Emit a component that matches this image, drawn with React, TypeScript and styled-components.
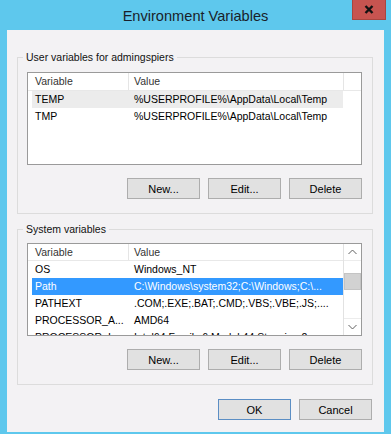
import styled, { createGlobalStyle } from "styled-components";

type Row = { name: string; value: string; state?: "hover" | "selected" };

const userVars: Row[] = [
  { name: "TEMP", value: "%USERPROFILE%\\AppData\\Local\\Temp", state: "hover" },
  { name: "TMP", value: "%USERPROFILE%\\AppData\\Local\\Temp" },
];

const systemVars: Row[] = [
  { name: "OS", value: "Windows_NT" },
  { name: "Path", value: "C:\\Windows\\system32;C:\\Windows;C:\\...", state: "selected" },
  { name: "PATHEXT", value: ".COM;.EXE;.BAT;.CMD;.VBS;.VBE;.JS;...." },
  { name: "PROCESSOR_A...", value: "AMD64" },
  { name: "PROCESSOR_I...", value: "Intel64 Family 6 Model 44 Stepping 2" },
];

const Chevron = ({ up }: { up?: boolean }) => (
  <svg width="9" height="6" viewBox="0 0 9 6">
    <polyline
      points={up ? "0.5,5 4.5,1 8.5,5" : "0.5,1 4.5,5 8.5,1"}
      fill="none"
      stroke="#606060"
      strokeWidth="1"
    />
  </svg>
);

const CloseIcon = () => (
  <svg width="34" height="20" viewBox="0 0 34 20">
    <rect x="0.5" y="-1" width="33" height="20.5" fill="#c75450" stroke="#a8463f" />
    <path d="M13.5 6 L20.5 13 M20.5 6 L13.5 13" stroke="#111" strokeWidth="2.4" />
  </svg>
);

const VarList = ({
  rows,
  headerHeight,
  scroll,
}: {
  rows: Row[];
  headerHeight: number;
  scroll?: boolean;
}) => (
  <List>
    <ListBody>
      <Header $height={headerHeight}>
        <HeadCell $width={101}>Variable</HeadCell>
        <HeadCell $width={215}>Value</HeadCell>
      </Header>
      {rows.map((r) => (
        <ListRow key={r.name} $state={r.state}>
          <Cell $width={99}>{r.name}</Cell>
          <Cell $width={212}>{r.value}</Cell>
        </ListRow>
      ))}
    </ListBody>
    {scroll && (
      <ScrollBar>
        <Arrow>
          <Chevron up />
        </Arrow>
        <Track $offset={12}>
          <Thumb />
        </Track>
        <Arrow>
          <Chevron />
        </Arrow>
      </ScrollBar>
    )}
  </List>
);

const ButtonRow = () => (
  <Buttons>
    <Button>New...</Button>
    <Button>Edit...</Button>
    <Button>Delete</Button>
  </Buttons>
);

export default function App() {
  return (
    <>
      <GlobalStyle />
      <Window>
        <TitleBar>
          <span />
          <Title>Environment Variables</Title>
          <CloseButton>
            <CloseIcon />
          </CloseButton>
        </TitleBar>
        <Client>
          <Group>
            <Legend>User variables for admingspiers</Legend>
            <GroupBody $top={7}>
              <VarList rows={userVars} headerHeight={18} />
              <ButtonRow />
            </GroupBody>
          </Group>
          <Group $top={7}>
            <Legend>System variables</Legend>
            <GroupBody $top={6}>
              <VarList rows={systemVars} headerHeight={17} scroll />
              <ButtonRow />
            </GroupBody>
          </Group>
          <DialogButtons>
            <Button $default>OK</Button>
            <Button>Cancel</Button>
          </DialogButtons>
        </Client>
      </Window>
    </>
  );
}

const GlobalStyle = createGlobalStyle`
  html, body {
    margin: 0;
    padding: 0;
    background: #5ec8ed;
  }
  body {
    font-family: "Liberation Sans", Arial, sans-serif;
  }
`;

const Window = styled.div`
  width: 391px;
  height: 434px;
  background: #5ec8ed;
  display: flex;
  flex-direction: column;
`;

const TitleBar = styled.div`
  height: 30px;
  flex-shrink: 0;
  display: grid;
  grid-template-columns: 1fr auto 1fr;
`;

const Title = styled.span`
  align-self: center;
  font-size: 14.6px;
  color: #1a1f2a;
  margin-top: 1px;
`;

const CloseButton = styled.div`
  justify-self: end;
  align-self: start;
  margin-right: 5px;
  width: 34px;
  height: 20px;
  line-height: 0;
`;

const Client = styled.div`
  flex: 1;
  margin: 0 7px 6px;
  background: #f3f2f4;
  padding: 19px 11px 12px 10px;
  display: flex;
  flex-direction: column;
  font-size: 10.5px;
  color: #000;
`;

const Group = styled.fieldset<{ $top?: number }>`
  margin: ${(p) => p.$top ?? 0}px 0 0;
  padding: 0 10px 14px 0;
  border: 1px solid #dcdcdc;
  min-width: 0;
`;

const Legend = styled.legend`
  margin-left: 5px;
  padding: 0 3px;
  line-height: 16px;
  font-size: 10.5px;
  color: #111;
`;

const GroupBody = styled.div<{ $top: number }>`
  padding: ${(p) => p.$top}px 0 0 9px;
`;

const List = styled.div`
  height: 93px;
  box-sizing: border-box;
  border: 1px solid #9a9a9a;
  background: #fff;
  display: flex;
  overflow: hidden;
`;

const ListBody = styled.div`
  flex: 1;
  min-width: 0;
  overflow: hidden;
`;

const Header = styled.div<{ $height: number }>`
  display: flex;
  height: ${(p) => p.$height}px;
  line-height: ${(p) => p.$height - 1}px;
  box-sizing: border-box;
  border-bottom: 1px solid #e8e8e8;
  color: #333;
`;

const HeadCell = styled.div<{ $width: number }>`
  width: ${(p) => p.$width}px;
  flex-shrink: 0;
  box-sizing: border-box;
  border-right: 1px solid #e5e5e5;
  padding-left: 5px;
  &:first-child {
    padding-left: 7px;
  }
`;

const ListRow = styled.div<{ $state?: "hover" | "selected" }>`
  display: flex;
  width: 311px;
  height: 17px;
  line-height: 17px;
  margin-left: 4px;
  background: ${(p) =>
    p.$state === "selected" ? "#3399ff" : p.$state === "hover" ? "#ececec" : "transparent"};
  color: ${(p) => (p.$state === "selected" ? "#fff" : "#000")};
`;

const Cell = styled.div<{ $width: number }>`
  width: ${(p) => p.$width}px;
  flex-shrink: 0;
  padding-left: 3px;
  box-sizing: border-box;
  white-space: nowrap;
  overflow: hidden;
`;

const ScrollBar = styled.div`
  width: 17px;
  flex-shrink: 0;
  border-left: 1px solid #e2e2e2;
  background: #fff;
  display: flex;
  flex-direction: column;
`;

const Arrow = styled.div`
  height: 17px;
  flex-shrink: 0;
  display: flex;
  align-items: center;
  justify-content: center;
  border-bottom: 1px solid #ececec;
  box-sizing: border-box;
  &:last-child {
    border-bottom: none;
    border-top: 1px solid #ececec;
  }
`;

const Track = styled.div<{ $offset: number }>`
  flex: 1;
  padding-top: ${(p) => p.$offset}px;
`;

const Thumb = styled.div`
  height: 17px;
  background: #d2d2d2;
  border: 1px solid #c4c4c4;
  box-sizing: border-box;
`;

const Buttons = styled.div`
  display: flex;
  justify-content: flex-end;
  gap: 8px;
  margin-top: 13px;
`;

const DialogButtons = styled(Buttons)`
  margin-top: 14px;
  margin-right: 1px;
`;

const Button = styled.div<{ $default?: boolean }>`
  width: 73px;
  height: 21px;
  box-sizing: border-box;
  background: #e1e1e1;
  border: 1px solid ${(p) => (p.$default ? "#5b8ec4" : "#adadad")};
  display: flex;
  align-items: center;
  justify-content: center;
  font-size: 11px;
  color: #000;
`;
